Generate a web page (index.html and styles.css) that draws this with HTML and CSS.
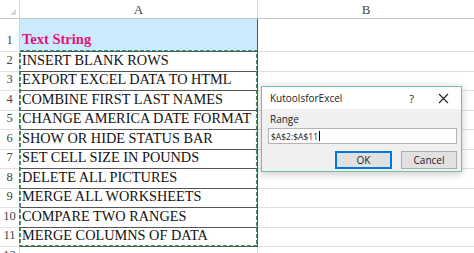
FILE: index.html
```html
<!DOCTYPE html>
<html lang="en">
<head>
    <meta charset="UTF-8">
    <title>Select Range</title>
    <link rel="stylesheet" href="styles.css">
</head>
<body>
    <div class="wrap">
        <div class="sheet">
            <div class="corner"><span class="tri"></span></div>
            <div class="colhead">A</div>
            <div class="colhead last">B</div>

            <div class="rownum">1</div>
            <div class="cell a title">Text String</div>
            <div class="cell b"></div>

            <div class="rownum">2</div>
            <div class="cell a">INSERT BLANK ROWS</div>
            <div class="cell b"></div>
            <div class="rownum">3</div>
            <div class="cell a">EXPORT EXCEL DATA TO HTML</div>
            <div class="cell b"></div>
            <div class="rownum">4</div>
            <div class="cell a">COMBINE FIRST LAST NAMES</div>
            <div class="cell b"></div>
            <div class="rownum">5</div>
            <div class="cell a">CHANGE AMERICA DATE FORMAT</div>
            <div class="cell b"></div>
            <div class="rownum">6</div>
            <div class="cell a">SHOW OR HIDE STATUS BAR</div>
            <div class="cell b"></div>
            <div class="rownum">7</div>
            <div class="cell a">SET CELL SIZE IN POUNDS</div>
            <div class="cell b"></div>
            <div class="rownum">8</div>
            <div class="cell a">DELETE ALL PICTURES</div>
            <div class="cell b"></div>
            <div class="rownum">9</div>
            <div class="cell a">MERGE ALL WORKSHEETS</div>
            <div class="cell b"></div>
            <div class="rownum">10</div>
            <div class="cell a">COMPARE TWO RANGES</div>
            <div class="cell b"></div>
            <div class="rownum">11</div>
            <div class="cell a">MERGE COLUMNS OF DATA</div>
            <div class="cell b"></div>
            <div class="rownum">12</div>
            <div class="cell plain"></div>
            <div class="cell b"></div>
        </div>

        <!-- copy marquee round A2:A11 -->
        <svg class="marquee" width="240" height="198" viewBox="0 0 240 198">
            <rect x="1" y="1" width="237" height="195" fill="none" stroke="#217346" stroke-width="1.6" stroke-dasharray="4 2"/>
        </svg>

        <div class="dialog">
            <div class="dlg-title">
                <span class="dlg-name">KutoolsforExcel</span>
                <span class="dlg-help">?</span>
                <svg class="dlg-close" width="11" height="11" viewBox="0 0 11 11">
                    <path d="M1 1 L10 10 M10 1 L1 10" stroke="#222" stroke-width="1.1"/>
                </svg>
            </div>
            <div class="dlg-body">
                <div class="dlg-label">Range</div>
                <div class="dlg-input">$A$2:$A$11<span class="caret"></span></div>
                <div class="dlg-buttons">
                    <div class="btn ok">OK</div>
                    <div class="btn">Cancel</div>
                </div>
            </div>
        </div>
    </div>
</body>
</html>
```

FILE: styles.css
```css
body {
    margin: 0;
    background: #fff;
    overflow: hidden;
}
.wrap {
    position: relative;
    width: 474px;
    height: 253px;
    overflow: hidden;
}
.sheet {
    display: grid;
    grid-template-columns: 20px 238px 216px;
    grid-template-rows: 19px 33px repeat(11, 19.5px);
    font-family: "Liberation Serif", "Times New Roman", serif;
}
.corner {
    position: relative;
    border-right: 1px solid #d4d4d4;
    border-bottom: 1px solid #c6c6c6;
}
.tri {
    position: absolute;
    right: 3px;
    bottom: 3px;
    width: 0;
    height: 0;
    border-left: 6px solid transparent;
    border-bottom: 6px solid #d8d8d8;
}
.colhead {
    display: flex;
    align-items: center;
    justify-content: center;
    font-size: 13px;
    color: #444;
    border-right: 1px solid #d4d4d4;
    border-bottom: 1px solid #c6c6c6;
    padding-top: 1px;
}
.colhead.last {
    border-right: none;
}
.rownum {
    display: flex;
    align-items: flex-end;
    justify-content: center;
    padding-bottom: 3px;
    font-size: 12.5px;
    color: #444;
    border-right: 1px solid #d4d4d4;
    border-bottom: 1px solid #e2e2e2;
}
.cell {
    display: flex;
    align-items: flex-end;
    padding: 0 0 2px 2px;
    font-size: 14.3px;
    color: #111;
    white-space: nowrap;
    overflow: hidden;
}
.cell.a {
    border-right: 1px solid #555;
    border-bottom: 1px solid #555;
}
.cell.title {
    background: #cbeafb;
    color: #e0157b;
    font-weight: bold;
    font-size: 14.5px;
    padding-bottom: 3px;
}
.cell.b,
.cell.plain {
    border-bottom: 1px solid #e0e0e0;
}
.cell.plain {
    border-right: 1px solid #d4d4d4;
}
.marquee {
    position: absolute;
    left: 19px;
    top: 50px;
}
.dialog {
    position: absolute;
    left: 261px;
    top: 86px;
    width: 199px;
    height: 84px;
    border: 1px solid #6cc39f;
    background: #f0f0f0;
    box-shadow: 0 2px 8px rgba(0,0,0,0.22);
    font-family: "Open Sans", "Noto Sans", sans-serif;
    font-size: 10px;
    color: #222;
}
.dlg-title {
    display: flex;
    align-items: center;
    height: 22px;
    padding: 0 0 0 8px;
    background: #fff;
}
.dlg-name {
    flex: 1;
}
.dlg-help {
    font-size: 11px;
    margin-right: 24px;
}
.dlg-close {
    margin-right: 12px;
}
.dlg-body {
    padding: 3px 4px 0 6px;
}
.dlg-label {
    margin-left: 2px;
    line-height: 14px;
}
.dlg-input {
    display: flex;
    align-items: center;
    height: 14px;
    margin-top: 2px;
    padding-left: 2px;
    background: #fff;
    border: 1px solid #b5b5b5;
    font-size: 8.5px;
}
.caret {
    width: 1px;
    height: 10px;
    background: #000;
    margin-left: 1px;
}
.dlg-buttons {
    display: flex;
    justify-content: flex-end;
    gap: 9px;
    margin-top: 7px;
}
.btn {
    display: flex;
    align-items: center;
    justify-content: center;
    width: 54px;
    height: 16px;
    background: #e1e1e1;
    border: 1px solid #adadad;
}
.btn.ok {
    border: 2px solid #0078d7;
    width: 53px;
    height: 14px;
}
```
